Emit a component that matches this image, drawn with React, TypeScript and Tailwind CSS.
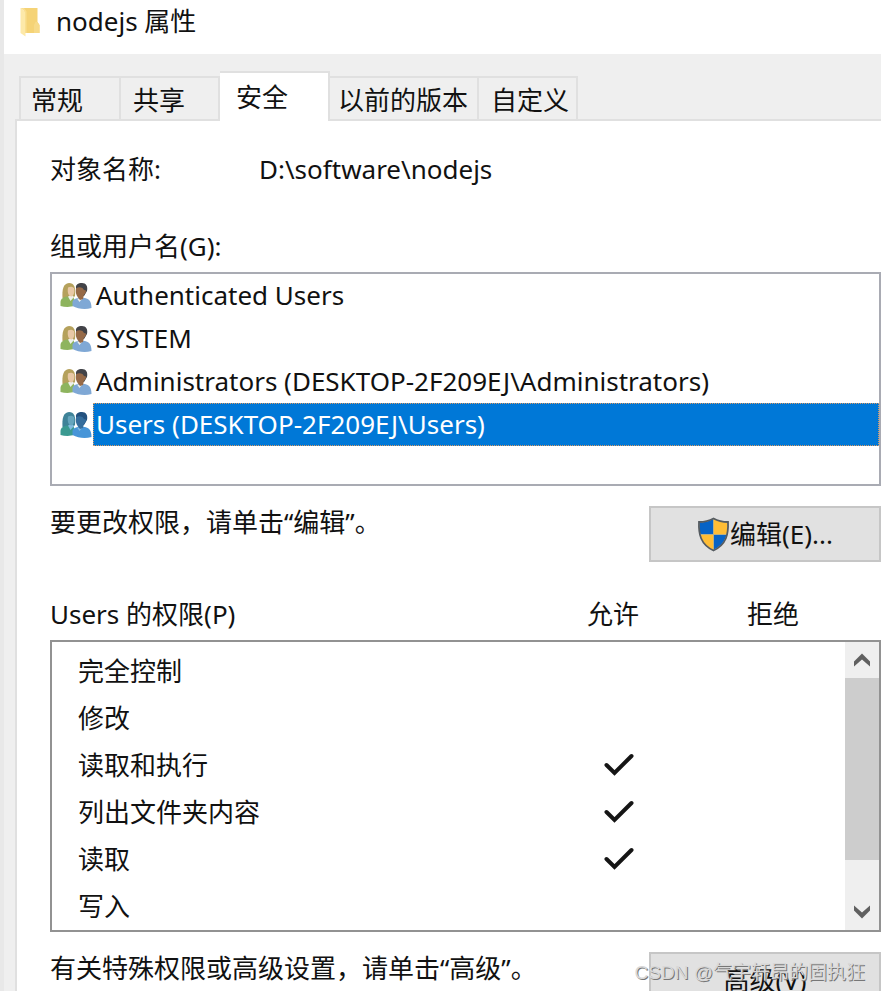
import { useState } from 'react'
import clsx from 'clsx'

const TABS = [
  { label: '常规', size: 'w-[102px] pl-2.5' },
  { label: '共享', size: 'w-[99px] pl-3' },
  { label: '安全', size: 'w-[110px] pl-4' },
  { label: '以前的版本', size: 'w-[149px] pl-2' },
  { label: '自定义', size: 'w-[99px] pl-3' },
]

const GROUPS = [
  'Authenticated Users',
  'SYSTEM',
  'Administrators (DESKTOP-2F209EJ\\Administrators)',
  'Users (DESKTOP-2F209EJ\\Users)',
]

const PERMISSIONS = [
  { name: '完全控制', allow: false },
  { name: '修改', allow: false },
  { name: '读取和执行', allow: true },
  { name: '列出文件夹内容', allow: true },
  { name: '读取', allow: true },
  { name: '写入', allow: false },
]

function FolderIcon() {
  return (
    <svg width="20" height="32" viewBox="0 0 20 32" aria-hidden="true">
      <path d="M4 3H17.500V17L19.500 20V28H4Z" fill="#f5d376" />
      <path d="M14 20L15.500 17H17.500L19.500 20V28H14Z" fill="#f7da88" />
      <path d="M0.500 3L5.500 7V31.500L0.500 28Z" fill="#fde9a9" />
      <path d="M0.500 3H4L6.500 6.500V28H5.500V7Z" fill="#fadf92" />
    </svg>
  )
}

function GroupIcon({ selected }: { selected: boolean }) {
  const c = selected
    ? { hair: '#3f8398', face: '#66a5bd', green: '#3b9a91', dark: '#24527f', skin: '#356d9c', blue: '#4795d8', shirt: '#83bce0' }
    : { hair: '#b5a15c', face: '#e8c8a6', green: '#8eb45e', dark: '#424348', skin: '#966a48', blue: '#7fa8d5', shirt: '#eef0ec' }
  return (
    <svg width="32" height="28" viewBox="0 0 32 28" className="shrink-0" aria-hidden="true">
      <path d="M2.500 16C2 8 3 1.500 9 1C14 1 16 5 15 14L12 17H5Z" fill={c.hair} />
      <path d="M0.500 24V20C0.500 16.500 4 15 7 14.500L13 15C15 17 15 21 14.500 23.500C10 25.500 5 25 0.500 24Z" fill={c.green} />
      <path d="M8 14.500L10.500 19L14 15L12 13Z" fill={c.shirt} />
      <path d="M8 5.500C10 4.500 11.500 4 14 6C15 9.500 14 13.500 11.500 14.500C9 14.500 7 11.500 8 5.500Z" fill={c.face} />
      <path d="M12.500 24V20C13 17 16.500 16.500 19 15.500L25 16C29 17 31.500 19 31.500 26C25 28 18 27 12.500 24Z" fill={c.blue} />
      <path d="M17 16.500L19.500 20L22 17Z" fill={c.shirt} />
      <path d="M16 6C15.500 2.500 18 1 22 1C26 1 28 4 27 9L24 14H18Z" fill={c.dark} />
      <path d="M16 6.500C18 5 20 5 22.500 6L24 8L26 8.500C26 11 25 12 24 12.500L23 17L20 18L18 15.500C16 13 15.500 10 16 6.500Z" fill={c.skin} />
    </svg>
  )
}

function ShieldIcon() {
  return (
    <svg width="33" height="35" viewBox="0 0 33 35" className="shrink-0" aria-hidden="true">
      <defs>
        <clipPath id="shield-shape">
          <path d="M16.500 2C12 4.500 7 5.500 2.500 5.500C2 17 4 27 16.500 33C29 27 31 17 30.500 5.500C26 5.500 21 4.500 16.500 2Z" />
        </clipPath>
      </defs>
      <g clipPath="url(#shield-shape)">
        <path d="M0 0H16.500V17.500H0ZM16.500 17.500H33V35H16.500Z" fill="#0763c6" />
        <path d="M16.500 0H33V17.500H16.500ZM0 17.500H16.500V35H0Z" fill="#ffbd35" />
      </g>
      <path
        d="M16.500 1.500C12 4 7 5 2 5C1.500 17 3.500 27.500 16.500 33.500C29.500 27.500 31.500 17 31 5C26 5 21 4 16.500 1.500Z"
        fill="none"
        stroke="#555b60"
        strokeWidth="1.800"
      />
    </svg>
  )
}

function CheckIcon() {
  return (
    <svg width="30" height="24" viewBox="0 0 30 24" className="mx-auto" role="img" aria-label="允许">
      <path
        d="M2.500 12L10.500 20L27.500 3"
        fill="none"
        stroke="#151515"
        strokeWidth="4"
        strokeLinecap="round"
      />
    </svg>
  )
}

function Chevron({ up }: { up?: boolean }) {
  return (
    <svg width="18" height="14" viewBox="0 0 18 14" aria-hidden="true">
      <path
        d={up ? 'M1 8.500L9 0.500L17 8.500V13.500L9 6.500L1 13.500Z' : 'M1 5.500L9 13.500L17 5.500V0.500L9 7.500L1 0.500Z'}
        fill="#606060"
      />
    </svg>
  )
}

export default function App() {
  const [tab, setTab] = useState(2)
  const [group, setGroup] = useState(3)

  return (
    <div className="relative h-screen overflow-hidden border-l-4 border-[#e8e8e8] bg-[#efefef] font-['Noto_Sans','Noto_Sans_CJK_SC',sans-serif] text-[26px] leading-8 text-[#111]">
      <header className="flex h-[54px] items-start gap-4 bg-white px-4 pt-[5px]">
        <FolderIcon />
        <h1>nodejs 属性</h1>
      </header>

      <div className="flex h-[65px] items-end pl-[15px]" role="tablist">
        {TABS.map(({ label, size }, i) => (
          <button
            key={label}
            type="button"
            role="tab"
            aria-selected={tab === i}
            onClick={() => setTab(i)}
            className={clsx(
              'relative border-t-2 border-r-2 border-[#e0e0e0] text-left whitespace-nowrap first:border-l-2',
              size,
              tab === i ? 'z-10 -mb-0.5 h-[50px] bg-white' : 'h-[43px] pt-0.5',
            )}
          >
            {label}
          </button>
        ))}
      </div>

      <main className="ml-[11px] border-t-2 border-l-2 border-[#e0e0e0] bg-white pt-[30px] pb-8 pl-[33px]">
        <dl className="flex h-9 items-center">
          <dt className="w-[209px]">对象名称:</dt>
          <dd>D:\software\nodejs</dd>
        </dl>

        <h2 id="groups-label" className="mt-[41px] flex h-9 items-center">
          组或用户名(G):
        </h2>
        <ul
          role="listbox"
          aria-labelledby="groups-label"
          className="mt-2 h-[214px] border-2 border-[#a9abb3] pl-2"
        >
          {GROUPS.map((name, i) => (
            <li
              key={name}
              role="option"
              aria-selected={group === i}
              onClick={() => setGroup(i)}
              className="flex h-[43px] items-center"
            >
              <GroupIcon selected={group === i} />
              <span
                className={clsx(
                  'ml-px flex h-full flex-1 items-center border pb-0.5 pl-0.5 whitespace-nowrap',
                  group === i ? 'border-dotted border-[#d99a63] bg-[#0078d7] text-white' : 'border-transparent',
                )}
              >
                {name}
              </span>
            </li>
          ))}
        </ul>

        <div className="mt-5 flex items-start justify-between">
          <p>要更改权限，请单击“编辑”。</p>
          <button
            type="button"
            className="flex h-14 w-[232px] items-center justify-center border-2 border-[#c6c6c6] bg-[#e1e1e1]"
          >
            <ShieldIcon />
            编辑(E)...
          </button>
        </div>

        <div className="mt-[34px] flex h-9 items-center pr-7 text-center">
          <h2 id="permissions-label" className="flex-1 text-left">
            Users 的权限(P)
          </h2>
          <span className="w-40">允许</span>
          <span className="w-40">拒绝</span>
        </div>
        <div className="mt-2 flex h-[292px] overflow-hidden border-2 border-[#929292]">
          <div className="flex-1 overflow-hidden pt-[5px] pl-[26px]">
            <table className="w-full table-fixed" aria-labelledby="permissions-label">
              <tbody>
                {PERMISSIONS.map((row) => (
                  <tr key={row.name} className="h-[47px]">
                    <th scope="row" className="text-left font-normal">
                      {row.name}
                    </th>
                    <td className="w-40">{row.allow && <CheckIcon />}</td>
                    <td className="w-[146px]" />
                  </tr>
                ))}
              </tbody>
            </table>
          </div>
          <div className="flex w-[34px] flex-col bg-[#efefef]">
            <button type="button" aria-label="向上滚动" className="flex h-9 items-center justify-center">
              <Chevron up />
            </button>
            <div className="h-[182px] bg-[#cdcdcd]" />
            <button type="button" aria-label="向下滚动" className="mt-auto flex h-9 items-center justify-center">
              <Chevron />
            </button>
          </div>
        </div>

        <div className="mt-5 flex items-start justify-between">
          <p>有关特殊权限或高级设置，请单击“高级”。</p>
          <button
            type="button"
            className="flex h-14 w-[232px] items-center justify-center border-2 border-[#c6c6c6] bg-[#e1e1e1]"
          >
            高级(V)
          </button>
        </div>
      </main>

      <div className="pointer-events-none absolute right-4 bottom-1 z-20 font-['Liberation_Sans','Noto_Sans_CJK_SC',sans-serif] text-[19px] leading-7 text-[#d8d8d8] [text-shadow:1px_1px_0_#777]">
        CSDN @气宇轩昂的固执狂
      </div>
    </div>
  )
}
